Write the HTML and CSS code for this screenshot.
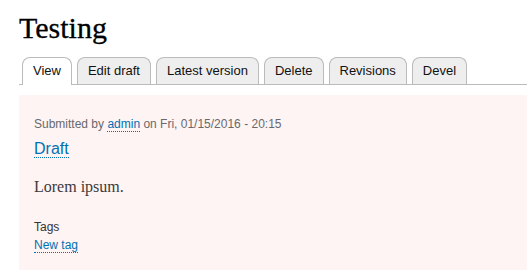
FILE: index.html
```html
<!DOCTYPE html>
<html>
<head>
<meta charset="utf-8">
<link rel="stylesheet" href="styles.css">
</head>
<body>
<h1 class="title">Testing</h1>
<ul class="tabs">
  <li><a class="tab active" href="#">View</a></li>
  <li><a class="tab" href="#">Edit draft</a></li>
  <li><a class="tab" href="#">Latest version</a></li>
  <li><a class="tab" href="#">Delete</a></li>
  <li><a class="tab" href="#">Revisions</a></li>
  <li><a class="tab" href="#">Devel</a></li>
</ul>
<div class="node">
  <div class="meta">Submitted by <a class="link" href="#">admin</a> on Fri, 01/15/2016 - 20:15</div>
  <div class="state"><a class="link" href="#">Draft</a></div>
  <p class="body-text">Lorem ipsum.</p>
  <div class="field-label">Tags</div>
  <div class="field-item"><a class="link" href="#">New tag</a></div>
</div>
</body>
</html>
```
FILE: styles.css
```css
html, body {
  margin: 0;
  padding: 0;
  background: #fff;
}
body {
  font-family: "Liberation Sans", Arial, sans-serif;
  overflow: hidden;
}
.title {
  font-family: "Liberation Serif", Georgia, serif;
  font-weight: normal;
  font-size: 30px;
  line-height: 35px;
  color: #000;
  margin: 10px 0 0 19px;
  -webkit-text-stroke: 0.3px #000;
}
.tabs {
  list-style: none;
  display: flex;
  margin: 12px 0 0 19px;
  padding: 0 0 0 3px;
  border-bottom: 1px solid #bbb;
  height: 27px;
}
.tabs li {
  margin-right: 5px;
}
.tab {
  display: block;
  height: 26px;
  line-height: 26px;
  padding: 0 10px;
  border: 1px solid #bbb;
  border-bottom: none;
  border-radius: 8px 8px 0 0;
  background: #eee;
  color: #111;
  font-size: 13px;
  text-decoration: none;
}
.tab.active {
  background: #fff;
  height: 27px;
}
.node {
  margin: 10px 0 0 19px;
  background: #fff4f4;
  padding: 20px 15px 16px;
}
.link {
  color: #0071b3;
  text-decoration: none;
  border-bottom: 1px dotted #0071b3;
}
.meta {
  font-size: 12px;
  line-height: 18px;
  color: #68696b;
}
.state {
  margin-top: 5px;
  font-size: 16px;
  line-height: 22px;
}
.body-text {
  font-family: "Liberation Serif", Georgia, serif;
  font-size: 16px;
  line-height: 24px;
  color: #3b3b3b;
  margin: 15px 0 0;
}
.field-label {
  margin-top: 19px;
  font-size: 12px;
  line-height: 18px;
  color: #333;
}
.field-item {
  font-size: 12px;
  line-height: 18px;
}
```
